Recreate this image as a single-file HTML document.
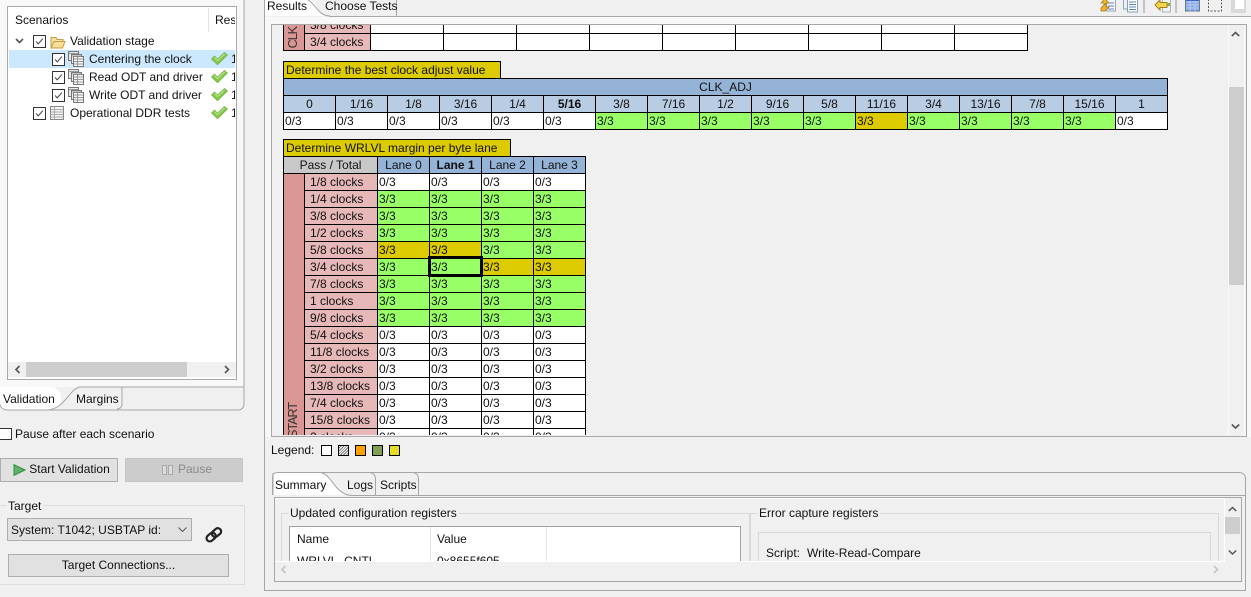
<!DOCTYPE html>
<html><head><meta charset="utf-8"><title>Validation</title>
<style>
html,body{margin:0;padding:0;width:1251px;height:597px;overflow:hidden}
body{position:relative;background:#f0f0f0;font:12px/16px "Liberation Sans",sans-serif;color:#111}
.a{position:absolute;white-space:nowrap}
.box{position:absolute;box-sizing:border-box}
.wrap{position:absolute;left:0;top:0;width:1251px;height:597px;overflow:hidden}
table{position:absolute;border-collapse:separate;border-spacing:0;table-layout:fixed;border-right:1px solid #000;border-bottom:1px solid #000;font:12px/16px "Liberation Sans",sans-serif;color:#111}
td{border-left:1px solid #000;border-top:1px solid #000;height:16px;padding:0 0 0 1px;overflow:hidden;white-space:nowrap;background:#fff;box-sizing:content-box}
.g{background:#99ff66}.y{background:#dccb00}
.l{background:#e6b8b7;padding-left:5px}
.d{background:#d99694}
.h{background:#b8cce4;text-align:center;padding:0}
.b{background:#95b3d7;text-align:center;padding:0}
.title{position:absolute;box-sizing:border-box;background:#dccb00;border:1px solid #000;border-bottom:0;height:18px;padding-left:2px;line-height:17px}
.cb{position:absolute;width:13px;height:13px;box-sizing:border-box;border:1px solid #333;background:#fff}
.btn{position:absolute;box-sizing:border-box;background:#e1e1e1;border:1px solid #adadad;text-align:center;line-height:21px}
.v{position:absolute;writing-mode:vertical-rl;transform:rotate(180deg);white-space:nowrap;font-size:12.5px;letter-spacing:-1px;color:#333}
svg{position:absolute;overflow:visible}
</style></head><body>

<svg width="0" height="0" style="left:0;top:0"><defs>
<symbol id="chk" viewBox="0 0 13 13"><path d="M2.5 6.5L5 9.3L10.5 3" fill="none" stroke="#444" stroke-width="1.2"/></symbol>
<symbol id="ok" viewBox="0 0 17 13"><path d="M0.5 7L3.5 4L6.5 7L13.5 0.5L16.5 3L6.500 12.800Z" fill="#86c84e" stroke="#74b23f" stroke-width="0.7"/><path d="M3.500 5.500L6.500 8.500L13.500 2" fill="none" stroke="#b9e690" stroke-width="1"/></symbol>
<symbol id="tabs" viewBox="0 0 16 16"><rect x=".5" y=".5" width="10" height="9" fill="#e8e8e8" stroke="#777"/><rect x="3.5" y="3.5" width="10" height="9" fill="#eee" stroke="#777"/><rect x="5.5" y="5.5" width="10" height="10" fill="#f6f6f6" stroke="#777"/><path d="M6 8h9M6 10.5h9M6 13h9M9.5 6v9" stroke="#999"/><path d="M1 2.5h9M4 5h9" stroke="#999"/></symbol>
</defs></svg>

<!-- LEFT PANEL -->
<div class="box" style="left:0;top:0;width:244px;height:387px;background:#f8f8f8"></div>
<div class="box" style="left:7px;top:6px;width:230px;height:374px;background:#fff;border:1px solid #a9a9a9"></div>
<div class="box" style="left:9px;top:50px;width:226px;height:18px;background:#cce8ff"></div>
<div class="a" style="left:15px;top:12px">Scenarios</div>
<div class="box" style="left:208px;top:8px;width:1px;height:24px;background:#e3e3e3"></div>
<div class="a" style="left:215px;top:12px;width:20px;overflow:hidden">Results</div>

<svg style="left:15px;top:38px" width="10" height="7"><path d="M1 1L4.5 4.5L8 1" fill="none" stroke="#555" stroke-width="1.6"/></svg>
<div class="cb" style="left:33px;top:35px"><svg width="11" height="11"><use href="#chk" width="11" height="11"/></svg></div>
<svg style="left:50px;top:35px" width="16" height="14"><path d="M1 13V2.5h5l1 2h6v2" fill="#f6e3a8" stroke="#c59a45"/><path d="M1 13L4 6.5h11L12.5 13Z" fill="#f9dd95" stroke="#c59a45"/></svg>
<div class="a" style="left:70px;top:33px">Validation stage</div>

<div class="cb" style="left:52px;top:53px"><svg width="11" height="11"><use href="#chk" width="11" height="11"/></svg></div>
<svg style="left:68px;top:51px" width="16" height="16"><use href="#tabs" width="16" height="16"/></svg>
<div class="a" style="left:89px;top:51px">Centering the clock</div>
<div class="cb" style="left:52px;top:71px"><svg width="11" height="11"><use href="#chk" width="11" height="11"/></svg></div>
<svg style="left:68px;top:69px" width="16" height="16"><use href="#tabs" width="16" height="16"/></svg>
<div class="a" style="left:89px;top:69px">Read ODT and driver</div>
<div class="cb" style="left:52px;top:89px"><svg width="11" height="11"><use href="#chk" width="11" height="11"/></svg></div>
<svg style="left:68px;top:87px" width="16" height="16"><use href="#tabs" width="16" height="16"/></svg>
<div class="a" style="left:89px;top:87px">Write ODT and driver</div>
<div class="cb" style="left:33px;top:107px"><svg width="11" height="11"><use href="#chk" width="11" height="11"/></svg></div>
<svg style="left:50px;top:106px" width="14" height="14"><rect x=".5" y=".5" width="13" height="13" fill="#f4f4f4" stroke="#888"/><path d="M1 3.5h12M1 6h12M1 8.5h12M1 11h12M4.5 1v12" stroke="#aaa"/></svg>
<div class="a" style="left:70px;top:105px">Operational DDR tests</div>

<svg style="left:211px;top:52px" width="17" height="13"><use href="#ok" width="17" height="13"/></svg><div class="a" style="left:231px;top:51px;width:4px;overflow:hidden">1</div>
<svg style="left:211px;top:70px" width="17" height="13"><use href="#ok" width="17" height="13"/></svg><div class="a" style="left:231px;top:69px;width:4px;overflow:hidden">1</div>
<svg style="left:211px;top:88px" width="17" height="13"><use href="#ok" width="17" height="13"/></svg><div class="a" style="left:231px;top:87px;width:4px;overflow:hidden">1</div>
<svg style="left:211px;top:106px" width="17" height="13"><use href="#ok" width="17" height="13"/></svg><div class="a" style="left:231px;top:105px;width:4px;overflow:hidden">1</div>

<!-- left h-scroll -->
<div class="box" style="left:8px;top:362px;width:228px;height:15px;background:#f0f0f0"></div>
<div class="box" style="left:26px;top:362px;width:161px;height:15px;background:#cdcdcd"></div>
<svg style="left:14px;top:365px" width="8" height="9"><path d="M5.5 1L2 4.5L5.5 8" fill="none" stroke="#555" stroke-width="1.6"/></svg>
<svg style="left:223px;top:365px" width="8" height="9"><path d="M2 1L5.5 4.5L2 8" fill="none" stroke="#555" stroke-width="1.6"/></svg>

<!-- left tabs -->
<svg style="left:0;top:380px" width="246" height="32">
<path d="M0 7H52C62 7 68 30 48 30H8C3 30 0 27 0 24Z" fill="#fff"/>
<path d="M0 24C0 27 3 30 8 30H238C242 30 244 27 244 24V-380" fill="none" stroke="#a6a6a6"/>
<path d="M244 7H81C70 7 66 28 48 30" fill="none" stroke="#a6a6a6"/>
<path d="M122 7V24C122 27 120 29 117 29" fill="none" stroke="#a6a6a6"/>
</svg>
<div class="a" style="left:3px;top:391px">Validation</div>
<div class="a" style="left:76px;top:391px">Margins</div>

<div class="box" style="left:-2px;top:428px;width:14px;height:12px;background:#fff;border:1px solid #333"></div>
<div class="a" style="left:15px;top:426px">Pause after each scenario</div>

<div class="btn" style="left:0;top:458px;width:118px;height:24px;padding-left:21px">Start Validation</div>
<svg style="left:13px;top:464px" width="13" height="12"><path d="M1 .7L12 6L1 11.3Z" fill="#5cb46c" stroke="#2f8a3d"/></svg>
<div class="btn" style="left:125px;top:458px;width:118px;height:24px;background:#cccccc;border-color:#c4c4c4;color:#8a8a8a;padding-left:22px">Pause</div>
<svg style="left:162px;top:465px" width="11" height="10"><rect x=".5" y=".5" width="4" height="9" fill="#ddd" stroke="#aaa"/><rect x="6.5" y=".5" width="4" height="9" fill="#ddd" stroke="#aaa"/></svg>

<div class="box" style="left:-2px;top:505px;width:247px;height:80px;border:1px solid #dcdcdc"></div>
<div class="a" style="left:6px;top:498px;background:#f0f0f0;padding:0 2px">Target</div>
<div class="box" style="left:7px;top:518px;width:185px;height:23px;background:#e1e1e1;border:1px solid #adadad"></div>
<div class="a" style="left:11px;top:522px">System: T1042; USBTAP id:</div>
<svg style="left:178px;top:527px" width="9" height="6"><path d="M.5 .5L4.5 4.5L8.5 .5" fill="none" stroke="#555"/></svg>
<svg style="left:205px;top:526px" width="19" height="18"><g fill="none" stroke="#222" stroke-width="2.2" transform="rotate(-40 9 9)"><rect x="0.5" y="5.5" width="10" height="6.5" rx="3.2"/><rect x="7.5" y="5.5" width="10" height="6.5" rx="3.2"/></g></svg>
<div class="btn" style="left:8px;top:554px;width:221px;height:23px">Target Connections...</div>

<!-- RIGHT TOP TABS -->
<div class="box" style="left:264px;top:17px;width:987px;height:420px;background:#f8f8f8;border-left:1px solid #a6a6a6"></div>
<svg style="left:262px;top:0" width="140" height="18">
<path d="M3 0H47C56 0 54 16 66 16H3Z" fill="#fff"/>
<path d="M46 0C54 4 56 16 68 16" fill="none" stroke="#a6a6a6"/>
<path d="M134.500 0V16" stroke="#a6a6a6"/>
<path d="M2.500 0V18" stroke="#a6a6a6"/>
</svg>
<div class="box" style="left:329px;top:16px;width:922px;height:1px;background:#a6a6a6"></div>
<div class="a" style="left:267px;top:-2px">Results</div>
<div class="a" style="left:325px;top:-2px">Choose Tests</div>

<!-- Toolbar -->
<svg style="left:1098px;top:0" width="153" height="14">
<rect x="8.500" y="-2" width="9" height="13" fill="#f2f5fa" stroke="#9aa8b8"/><path d="M10 3h6M10 6h6M10 9h6" stroke="#6a8cc0"/><path d="M3 3L7 -1L11 3L8 3L8 5L6 5L6 3Z" fill="#f0c030" stroke="#a8761a" stroke-width=".8"/><path d="M3 8L7 4L8 4L8 7L11 7L7 11L3 11Z" fill="#eeb22c" stroke="#a8761a" stroke-width=".8"/>
<rect x="25.500" y="-2" width="9" height="11" fill="#eef" stroke="#8aa"/><rect x="29.500" y="-2" width="10" height="14" fill="#fff" stroke="#8aa0b8"/><path d="M31 2h7M31 4.500h7M31 7h7M31 9.500h7" stroke="#5d86c0"/>
<path d="M46 0V13" stroke="#999"/>
<rect x="64.500" y="-2" width="8" height="14" fill="#eef3f7" stroke="#a7b5bd"/><path d="M57 5L62 0V2.500H69V7.500H62V10Z" fill="#f2d54a" stroke="#a57f1b"/><rect x="69" y="3" width="3" height="3" fill="#7fb048"/>
<path d="M78 0V13" stroke="#999"/>
<rect x="87.500" y="-2" width="14" height="13" fill="#88a8e8" stroke="#5a7f90"/><path d="M88 2h13M88 5h13M88 8h13M92 -2v13M97 -2v13" stroke="#b9cdf2"/><rect x="88" y="-2" width="13" height="3" fill="#3f66c8"/>
<rect x="110.500" y="-2" width="13" height="13" fill="none" stroke="#555" stroke-dasharray="2 1.500"/>
<rect x="133" y="-2" width="15" height="15" fill="#d9d9d9"/><rect x="137" y="0" width="9" height="9" fill="#fff"/>
</svg>

<!-- Results frame -->
<div class="box" style="left:271px;top:24px;width:976px;height:413px;background:#f0f0f0;border:1px solid #a6a6a6"></div>
<div class="box" style="left:1228px;top:25px;width:1px;height:411px;background:#fafafa"></div>
<div class="box" style="left:1244px;top:25px;width:1px;height:411px;background:#fafafa"></div>
<div class="box" style="left:1229px;top:87px;width:15px;height:198px;background:#cdcdcd"></div>
<svg style="left:1231px;top:31px" width="9" height="7"><path d="M.8 5L4.500 1.500L8.200 5" fill="none" stroke="#555" stroke-width="1.6"/></svg>
<svg style="left:1231px;top:423px" width="9" height="7"><path d="M.8 1.500L4.500 5L8.200 1.500" fill="none" stroke="#555" stroke-width="1.6"/></svg>

<div class="wrap" style="clip-path:inset(25px 23px 162px 272px)">
<!-- top table -->
<table style="left:283px;top:16px;width:745px">
<colgroup><col style="width:21px"><col style="width:66px"><col style="width:73px"><col style="width:73px"><col style="width:73px"><col style="width:73px"><col style="width:73px"><col style="width:73px"><col style="width:73px"><col style="width:73px"><col style="width:73px"></colgroup>
<tr><td class="d" rowspan="2"><td class="l">3/8 clocks<td><td><td><td><td><td><td><td><td></tr>
<tr><td class="l">3/4 clocks<td><td><td><td><td><td><td><td><td></tr>
</table>
<div class="v" style="left:285px;top:27px;line-height:16px">CLK</div>

<div class="title" style="left:283px;top:61px;width:218px">Determine the best clock adjust value</div>
<table style="left:283px;top:78px;width:885px">
<colgroup><col span="17" style="width:52px"></colgroup>
<tr><td class="b" colspan="17">CLK_ADJ</tr>
<tr><td class="h">0<td class="h">1/16<td class="h">1/8<td class="h">3/16<td class="h">1/4<td class="h"><b>5/16</b><td class="h">3/8<td class="h">7/16<td class="h">1/2<td class="h">9/16<td class="h">5/8<td class="h">11/16<td class="h">3/4<td class="h">13/16<td class="h">7/8<td class="h">15/16<td class="h">1</tr>
<tr><td>0/3<td>0/3<td>0/3<td>0/3<td>0/3<td>0/3<td class="g">3/3<td class="g">3/3<td class="g">3/3<td class="g">3/3<td class="g">3/3<td class="y">3/3<td class="g">3/3<td class="g">3/3<td class="g">3/3<td class="g">3/3<td>0/3</tr>
</table>

<div class="title" style="left:283px;top:139px;width:228px">Determine WRLVL margin per byte lane</div>
<table style="left:283px;top:156px;width:303px">
<colgroup><col style="width:21px"><col style="width:73px"><col span="4" style="width:52px"></colgroup>
<tr><td colspan="2" style="background:#c8c8c8;text-align:center;padding:0">Pass / Total<td class="b">Lane 0<td class="b"><b>Lane 1</b><td class="b">Lane 2<td class="b">Lane 3</tr>
<tr><td class="d" rowspan="16"><td class="l">1/8 clocks<td>0/3<td>0/3<td>0/3<td>0/3</tr>
<tr><td class="l">1/4 clocks<td class="g">3/3<td class="g">3/3<td class="g">3/3<td class="g">3/3</tr>
<tr><td class="l">3/8 clocks<td class="g">3/3<td class="g">3/3<td class="g">3/3<td class="g">3/3</tr>
<tr><td class="l">1/2 clocks<td class="g">3/3<td class="g">3/3<td class="g">3/3<td class="g">3/3</tr>
<tr><td class="l">5/8 clocks<td class="y">3/3<td class="y">3/3<td class="g">3/3<td class="g">3/3</tr>
<tr><td class="l">3/4 clocks<td class="g">3/3<td class="g">3/3<td class="y">3/3<td class="y">3/3</tr>
<tr><td class="l">7/8 clocks<td class="g">3/3<td class="g">3/3<td class="g">3/3<td class="g">3/3</tr>
<tr><td class="l">1 clocks<td class="g">3/3<td class="g">3/3<td class="g">3/3<td class="g">3/3</tr>
<tr><td class="l">9/8 clocks<td class="g">3/3<td class="g">3/3<td class="g">3/3<td class="g">3/3</tr>
<tr><td class="l">5/4 clocks<td>0/3<td>0/3<td>0/3<td>0/3</tr>
<tr><td class="l">11/8 clocks<td>0/3<td>0/3<td>0/3<td>0/3</tr>
<tr><td class="l">3/2 clocks<td>0/3<td>0/3<td>0/3<td>0/3</tr>
<tr><td class="l">13/8 clocks<td>0/3<td>0/3<td>0/3<td>0/3</tr>
<tr><td class="l">7/4 clocks<td>0/3<td>0/3<td>0/3<td>0/3</tr>
<tr><td class="l">15/8 clocks<td>0/3<td>0/3<td>0/3<td>0/3</tr>
<tr><td class="l">2 clocks<td>0/3<td>0/3<td>0/3<td>0/3</tr>
</table>
<div class="box" style="left:428px;top:256px;width:55px;height:21px;border:3px solid #000"></div>
<div class="v" style="left:285px;top:403px;line-height:16px">START</div>
</div>

<!-- Legend -->
<div class="box" style="left:264px;top:437px;width:987px;height:36px;background:#f0f0f0;border-left:1px solid #a6a6a6"></div>
<div class="a" style="left:271px;top:442px">Legend:</div>
<div class="box" style="left:321px;top:445px;width:11px;height:11px;background:#fff;border:1px solid #000"></div>
<div class="box" style="left:338px;top:445px;width:11px;height:11px;border:1px solid #000;background:repeating-linear-gradient(135deg,#fff 0 1px,#777 1px 2px)"></div>
<div class="box" style="left:355px;top:445px;width:11px;height:11px;background:#ff9f00;border:1px solid #000"></div>
<div class="box" style="left:372px;top:445px;width:11px;height:11px;background:#7fa050;border:1px solid #000"></div>
<div class="box" style="left:389px;top:445px;width:11px;height:11px;background:#e4dc20;border:1px solid #000"></div>

<!-- Bottom folder -->
<div class="box" style="left:265px;top:473px;width:980px;height:117px;background:#f0f0f0"></div>
<svg style="left:264px;top:470px" width="988" height="122">
<path d="M.5 -3V120.500H981.500V9C981.500 5 979 2.500 975 2.500H14C11 2.500 8.500 4 8.500 8V25" fill="none" stroke="#a6a6a6"/>
<path d="M9 25V8C9 4 11 3 14 3H55C68 3 70 25 88 25Z" fill="#fff"/>
<path d="M14 2.500H55C68 2.500 70 25 88 25.500H981" fill="none" stroke="#a6a6a6"/>
<path d="M9 3V25" stroke="#a6a6a6" fill="none"/>
<path d="M70 2.500H105C109 2.500 111.500 5 111.500 9V25" fill="none" stroke="#a6a6a6"/>
<path d="M111.500 2.500H148C152 2.500 154.500 5 154.500 9V25" fill="none" stroke="#a6a6a6"/>
</svg>
<div class="a" style="left:275px;top:477px">Summary</div>
<div class="a" style="left:347px;top:477px">Logs</div>
<div class="a" style="left:380px;top:477px">Scripts</div>

<div class="box" style="left:274px;top:497px;width:968px;height:85px;border:1px solid #a6a6a6;background:#f0f0f0"></div>
<div class="box" style="left:275px;top:498px;width:966px;height:80px;border-bottom:1px solid #a6a6a6;"></div>

<div class="wrap" style="clip-path:inset(498px 27px 36px 275px)">
<div class="box" style="left:281px;top:513px;width:469px;height:60px;border:1px solid #d9d9d9"></div>
<div class="a" style="left:288px;top:505px;background:#f0f0f0;padding:0 2px">Updated configuration registers</div>
<div class="box" style="left:289px;top:526px;width:452px;height:50px;background:#fff;border:1px solid #a0a0a0"></div>
<div class="box" style="left:430px;top:527px;width:1px;height:34px;background:#e4e4e4"></div>
<div class="box" style="left:546px;top:527px;width:1px;height:34px;background:#e4e4e4"></div>
<div class="a" style="left:297px;top:531px">Name</div>
<div class="a" style="left:437px;top:531px">Value</div>
<div class="a" style="left:297px;top:553px">WRLVL_CNTL</div>
<div class="a" style="left:437px;top:553px">0x8655f605</div>
<div class="box" style="left:750px;top:513px;width:469px;height:60px;border:1px solid #d9d9d9"></div>
<div class="a" style="left:757px;top:505px;background:#f0f0f0;padding:0 2px">Error capture registers</div>
<div class="box" style="left:758px;top:532px;width:453px;height:40px;border:1px solid #d9d9d9"></div>
<div class="a" style="left:766px;top:545px">Script:</div>
<div class="a" style="left:807px;top:545px">Write-Read-Compare</div>
</div>

<div class="box" style="left:275px;top:561px;width:950px;height:1px;background:#fff"></div>
<div class="box" style="left:1224px;top:498px;width:1px;height:63px;background:#fff"></div>
<div class="box" style="left:275px;top:498px;width:950px;height:1px;background:#fff"></div>
<div class="box" style="left:275px;top:562px;width:966px;height:16px;background:#f0f0f0"></div>
<div class="box" style="left:1225px;top:517px;width:15px;height:17px;background:#cdcdcd"></div>
<svg style="left:1228px;top:506px" width="9" height="7"><path d="M.8 5L4.500 1.500L8.200 5" fill="none" stroke="#555" stroke-width="1.500"/></svg>
<svg style="left:1228px;top:549px" width="9" height="7"><path d="M.8 1.500L4.500 5L8.200 1.500" fill="none" stroke="#555" stroke-width="1.500"/></svg>
<svg style="left:280px;top:565px" width="8" height="9"><path d="M5.500 1L2 4.500L5.500 8" fill="none" stroke="#c4c4c4" stroke-width="1.600"/></svg>
<svg style="left:1212px;top:565px" width="8" height="9"><path d="M2 1L5.500 4.500L2 8" fill="none" stroke="#c4c4c4" stroke-width="1.600"/></svg>
</body></html>
